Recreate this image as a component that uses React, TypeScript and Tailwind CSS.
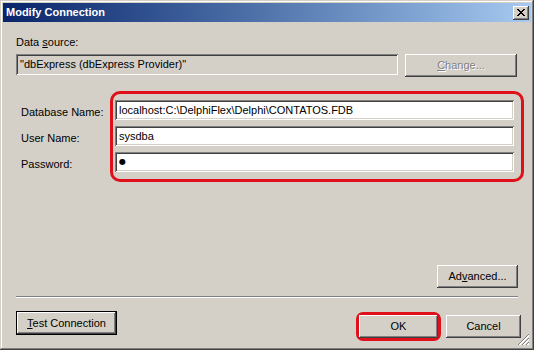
import React from "react";

const raised =
  "shadow-[inset_-1px_-1px_#404040,inset_1px_1px_#ffffff,inset_-2px_-2px_#808080,inset_2px_2px_#d4d0c8]";
const sunken =
  "shadow-[inset_1px_1px_#808080,inset_-1px_-1px_#ffffff,inset_2px_2px_#404040,inset_-2px_-2px_#d4d0c8]";

function Button({
  children,
  className = "",
  disabled = false,
}: {
  children: React.ReactNode;
  className?: string;
  disabled?: boolean;
}) {
  return (
    <div
      className={`flex items-center justify-center bg-[#d4d0c8] text-[11px] leading-[13px] ${raised} ${
        disabled ? "text-[#808080] [text-shadow:1px_1px_0_#ffffff]" : "text-black"
      } ${className}`}
    >
      {children}
    </div>
  );
}

function Field({ value, className = "" }: { value: React.ReactNode; className?: string }) {
  return (
    <div
      className={`flex h-[20px] items-center bg-white pl-[4px] text-[11px] leading-[13px] text-black ${sunken} ${className}`}
    >
      {value}
    </div>
  );
}

export default function App() {
  return (
    <div
      className="relative flex h-[350px] w-[534px] flex-col bg-[#d4d0c8] p-[3px] shadow-[inset_-1px_-1px_#404040,inset_1px_1px_#d4d0c8,inset_-2px_-2px_#808080,inset_2px_2px_#ffffff]"
      style={{ fontFamily: '"Liberation Sans", Arial, sans-serif' }}
    >
      {/* title bar */}
      <div className="flex h-[19px] items-center justify-between bg-gradient-to-r from-[#0a246a] to-[#a6caf0] pl-[3px] pr-[2px]">
        <span className="text-[11px] font-bold leading-[13px] text-white">Modify Connection</span>
        <div className={`flex h-[14px] w-[16px] items-center justify-center bg-[#d4d0c8] ${raised}`}>
          <svg width="8" height="7" viewBox="0 0 8 7" shapeRendering="crispEdges">
            <path
              d="M0 0h2v1h-2zM6 0h2v1h-2zM1 1h2v1h-2zM5 1h2v1h-2zM2 2h4v1h-4zM3 3h2v1h-2zM2 4h4v1h-4zM1 5h2v1h-2zM5 5h2v1h-2zM0 6h2v1h-2zM6 6h2v1h-2z"
              fill="#000"
            />
          </svg>
        </div>
      </div>

      {/* body */}
      <div className="flex flex-1 flex-col px-[13px] pt-[14px]">
        <div className="text-[11px] leading-[13px] text-black">
          Data <span className="underline">s</span>ource:
        </div>
        <div className="mt-[5px] flex items-start gap-[7px]">
          <div
            className={`flex h-[21px] w-[382px] items-center bg-[#d4d0c8] pl-[4px] text-[11px] leading-[13px] text-black ${sunken}`}
          >
            "dbExpress (dbExpress Provider)"
          </div>
          <Button disabled className="h-[23px] w-[112px]">
            <span>
              <span className="underline">C</span>hange...
            </span>
          </Button>
        </div>

        <div className="mt-[14px] flex">
          <div className="flex w-[94px] flex-col gap-[6px] pl-[5px] pt-[11px] text-[11px] leading-[13px] text-black">
            <div className="flex h-[20px] items-center">Database Name:</div>
            <div className="flex h-[20px] items-center">User Name:</div>
            <div className="flex h-[20px] items-center">Password:</div>
          </div>
          <div className="-mr-[6px] flex w-[414px] flex-col gap-[6px] rounded-[10px] border-[3px] border-[#e0101a] pb-[7px] pl-[2px] pr-[7px] pt-[6px]">
            <Field value="localhost:C:\DelphiFlex\Delphi\CONTATOS.FDB" />
            <Field value="sysdba" />
            <Field
              value={
                <span className="text-[8px] leading-[10px]" style={{ fontFamily: '"DejaVu Sans", sans-serif' }}>
                  ●
                </span>
              }
            />
          </div>
        </div>

        <Button className="mt-[83px] h-[23px] w-[81px] self-end">
          <span>
            Ad<span className="underline">v</span>anced...
          </span>
        </Button>

        <div className="mt-[8px] h-[2px] border-b border-t border-b-white border-t-[#808080]" />

        <div className="mt-[13px] flex items-start justify-between">
          <div className="h-[24px] w-[101px] border border-black">
            <Button className="h-full w-full">
              <span>
                <span className="underline">T</span>est Connection
              </span>
            </Button>
          </div>
          <div className="-mr-[3px] flex items-start gap-[5px]">
            <div className="mt-[1px] rounded-[7px] border-[3px] border-[#e0101a]">
              <Button className="h-[23px] w-[79px]">OK</Button>
            </div>
            <Button className="mt-[4px] h-[23px] w-[75px]">Cancel</Button>
          </div>
        </div>
      </div>

      {/* size grip */}
      <svg
        className="absolute bottom-[4px] right-[4px]"
        width="12"
        height="12"
        viewBox="0 0 12 12"
        shapeRendering="crispEdges"
      >
        <path d="M11 0L0 11M11 4L4 11M11 8L8 11" stroke="#808080" strokeWidth="1.4" />
        <path d="M11 1.5L1.5 11M11 5.5L5.5 11M11 9.5L9.5 11" stroke="#ffffff" strokeWidth="1" />
      </svg>
    </div>
  );
}
